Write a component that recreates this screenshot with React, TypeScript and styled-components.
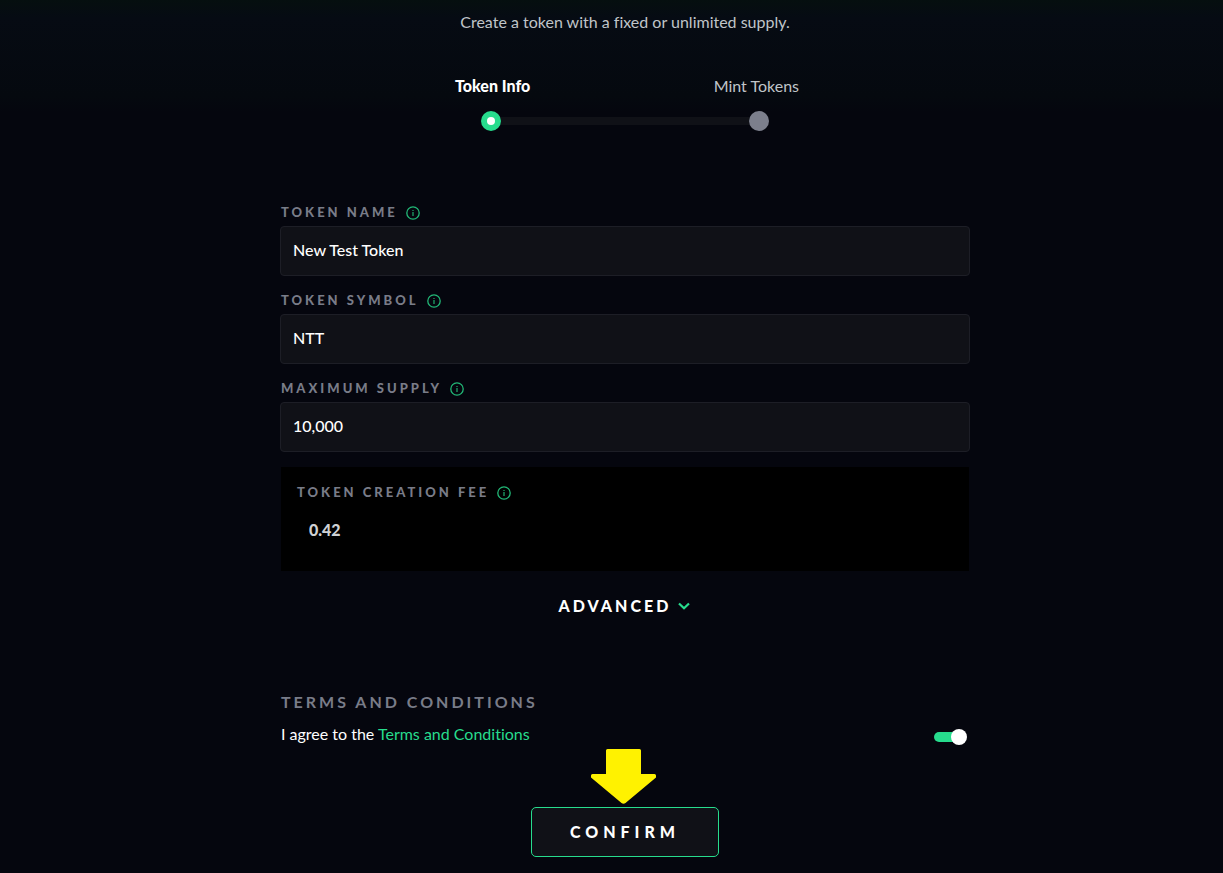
import React, { useState } from "react";
import styled, { createGlobalStyle } from "styled-components";

const GlobalStyle = createGlobalStyle`
  * { box-sizing: border-box; }
  body {
    margin: 0;
    min-height: 100vh;
    background: #05060e linear-gradient(#050f0f 0, #060b13 18px, #05090f 96px, #05060e 112px) no-repeat;
    color: #ffffff;
    font-family: Lato, "Liberation Sans", sans-serif;
    font-size: 16px;
    line-height: 24px;
    font-variant-ligatures: none;
  }
  input, button { font: inherit; color: inherit; }
`;

const Page = styled.main`
  padding: 10px 0 16px 27px;
`;

const Column = styled.form`
  display: flex;
  flex-direction: column;
  max-width: 690px;
  margin: 0 auto;
`;

const Intro = styled.p`
  margin: 0 0 40px;
  text-align: center;
  color: #c0c5c9;
`;

const Stepper = styled.div`
  width: 348px;
  max-width: 100%;
  margin: 0 auto 71px;
`;

const StepLabels = styled.div`
  display: flex;
  justify-content: space-between;
  margin-bottom: 13px;
  padding-left: 4px;
`;

const StepLabel = styled.span<{ $active?: boolean }>`
  color: ${(p) => (p.$active ? "#ffffff" : "#c0c5c9")};
  font-weight: ${(p) => (p.$active ? 900 : 400)};
`;

const Track = styled.div`
  display: flex;
  align-items: center;
  margin: 0 30px;
`;

const TrackLine = styled.div`
  flex: 1;
  height: 8px;
  background: #101117;
`;

const Dot = styled.span<{ $active?: boolean }>`
  display: flex;
  align-items: center;
  justify-content: center;
  width: 20px;
  height: 20px;
  border-radius: 50%;
  background: ${(p) => (p.$active ? "#27dc8d" : "#7c7f8c")};
  &::after {
    content: "";
    width: 8px;
    height: 8px;
    border-radius: 50%;
    background: ${(p) => (p.$active ? "#ffffff" : "transparent")};
  }
`;

const Field = styled.div`
  margin-bottom: 14px;
`;

const LabelRow = styled.div`
  display: flex;
  align-items: flex-end;
  gap: 8px;
  margin-bottom: 4px;
  padding-left: 1px;
`;

const Label = styled.label`
  color: #797c88;
  font-size: 13px;
  line-height: 20px;
  font-weight: 900;
  letter-spacing: 3px;
  text-transform: uppercase;
`;

const LabelIcon = styled.svg`
  margin-bottom: 2px;
`;

const TextInput = styled.input`
  display: block;
  width: 100%;
  height: 50px;
  padding: 0 12px 4px;
  border: 1px solid #1d1e26;
  border-radius: 4px;
  background: #101117;
  font-weight: 500;
  outline: none;
`;

const FeePanel = styled.section`
  margin: 1px 1px 23px;
  padding: 15px 15px 29px;
  background: #000000;
`;

const FeeValue = styled.output`
  display: block;
  margin-top: 16px;
  padding-left: 13px;
  color: #cfd1d4;
  font-weight: 900;
`;

const AdvancedButton = styled.button`
  display: flex;
  align-items: center;
  gap: 6px;
  align-self: center;
  margin-bottom: 72px;
  padding: 0;
  border: 0;
  background: none;
  font-weight: 900;
  letter-spacing: 3px;
  cursor: pointer;
`;

const TermsHeading = styled.h2`
  margin: 0 0 8px;
  padding-left: 1px;
  color: #797c88;
  font-size: 16px;
  line-height: 24px;
  font-weight: 700;
  letter-spacing: 3px;
`;

const TermsRow = styled.div`
  display: flex;
  align-items: flex-end;
  justify-content: space-between;
  margin-bottom: 61px;
  padding: 0 3px 0 1px;
`;

const TermsLink = styled.a`
  color: #27dc8d;
  text-decoration: none;
`;

const Switch = styled.input`
  appearance: none;
  display: flex;
  align-items: center;
  width: 33px;
  height: 16px;
  margin: 0 0 1px;
  cursor: pointer;
  position: relative;
  &::before {
    content: "";
    width: 29px;
    height: 10px;
    border-radius: 5px;
    background: ${(p) => (p.checked ? "#27dc8d" : "#7c7f8c")};
  }
  &::after {
    content: "";
    position: absolute;
    top: 0;
    right: ${(p) => (p.checked ? "0" : "17px")};
    width: 16px;
    height: 16px;
    border-radius: 50%;
    background: #ffffff;
  }
`;

const ConfirmArea = styled.div`
  position: relative;
  align-self: center;
`;

const Pointer = styled.svg`
  position: absolute;
  left: 60px;
  bottom: 52px;
  pointer-events: none;
`;

const ConfirmButton = styled.button`
  display: block;
  width: 188px;
  height: 50px;
  padding: 0;
  border: 1px solid #27dc8d;
  border-radius: 5px;
  background: #101117;
  font-weight: 900;
  letter-spacing: 5px;
  cursor: pointer;
`;

const InfoIcon = () => (
  <LabelIcon width="14" height="14" viewBox="0 0 14 14" fill="none" aria-hidden="true">
    <circle cx="7" cy="7" r="6.2" stroke="#22b877" strokeWidth="1.3" />
    <path d="M7 6v4M7 4v1" stroke="#1c965f" strokeWidth="1.4" />
  </LabelIcon>
);

const fields = [
  { id: "name", label: "Token name", value: "New Test Token" },
  { id: "symbol", label: "Token symbol", value: "NTT" },
  { id: "supply", label: "Maximum supply", value: "10,000" },
];

export default function App() {
  const [agreed, setAgreed] = useState(true);
  return (
    <>
      <GlobalStyle />
      <Page>
        <Column onSubmit={(e) => e.preventDefault()}>
          <Intro>Create a token with a fixed or unlimited supply.</Intro>
          <Stepper>
            <StepLabels>
              <StepLabel $active>Token Info</StepLabel>
              <StepLabel>Mint Tokens</StepLabel>
            </StepLabels>
            <Track>
              <Dot $active />
              <TrackLine />
              <Dot />
            </Track>
          </Stepper>
          {fields.map((f) => (
            <Field key={f.id}>
              <LabelRow>
                <Label htmlFor={f.id}>{f.label}</Label>
                <InfoIcon />
              </LabelRow>
              <TextInput id={f.id} defaultValue={f.value} />
            </Field>
          ))}
          <FeePanel>
            <LabelRow>
              <Label htmlFor="fee">Token creation fee</Label>
              <InfoIcon />
            </LabelRow>
            <FeeValue id="fee">0.42</FeeValue>
          </FeePanel>
          <AdvancedButton type="button">
            ADVANCED
            <svg width="14" height="10" viewBox="0 0 14 10" fill="none" aria-hidden="true">
              <path d="M2 2.5 7 7.3 12 2.5" stroke="#27dc8d" strokeWidth="2.2" />
            </svg>
          </AdvancedButton>
          <TermsHeading>TERMS AND CONDITIONS</TermsHeading>
          <TermsRow>
            <label htmlFor="agree">
              I agree to the <TermsLink href="#terms">Terms and Conditions</TermsLink>
            </label>
            <Switch
              id="agree"
              type="checkbox"
              checked={agreed}
              onChange={(e) => setAgreed(e.target.checked)}
            />
          </TermsRow>
          <ConfirmArea>
            <Pointer width="66" height="56" viewBox="0 0 66 56" aria-hidden="true">
              <path
                d="M16.500 0H48.500Q50 0 50 1.500V25H63.500Q65 25 65 26.500V28.500L34.500 54Q32.500 55.500 30.500 54L0 28.500V26.500Q0 25 1.500 25H15V1.500Q15 0 16.500 0Z"
                fill="#fff200"
              />
            </Pointer>
            <ConfirmButton type="submit">CONFIRM</ConfirmButton>
          </ConfirmArea>
        </Column>
      </Page>
    </>
  );
}
